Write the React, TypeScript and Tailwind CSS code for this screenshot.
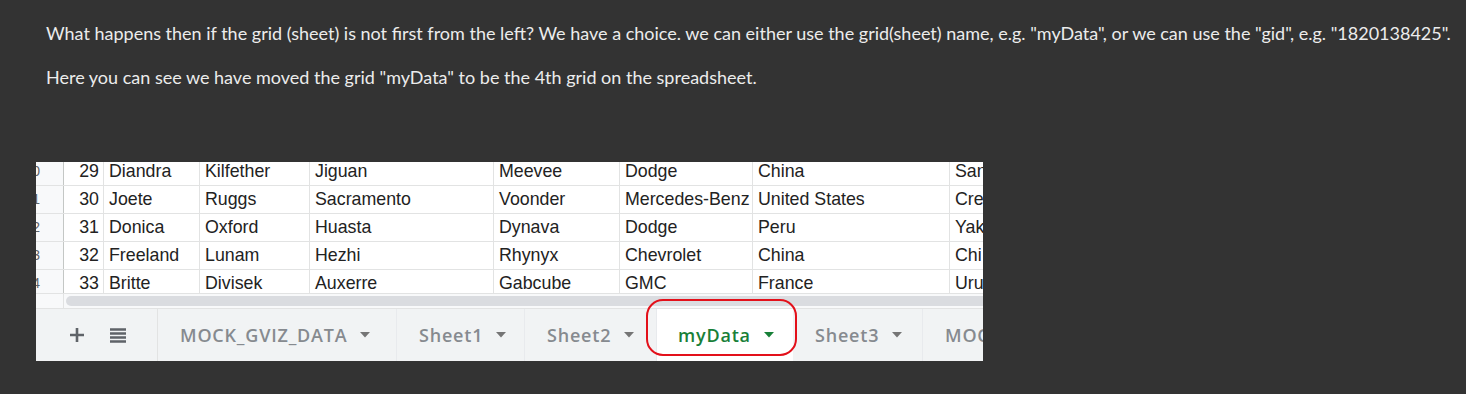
import React from 'react'

type Row = { n: number; first: string; last: string; city: string; co: string; car: string; country: string; next: string }

const ROWS: Row[] = [
  { n: 29, first: 'Diandra', last: 'Kilfether', city: 'Jiguan', co: 'Meevee', car: 'Dodge', country: 'China', next: 'San' },
  { n: 30, first: 'Joete', last: 'Ruggs', city: 'Sacramento', co: 'Voonder', car: 'Mercedes-Benz', country: 'United States', next: 'Cre' },
  { n: 31, first: 'Donica', last: 'Oxford', city: 'Huasta', co: 'Dynava', car: 'Dodge', country: 'Peru', next: 'Yak' },
  { n: 32, first: 'Freeland', last: 'Lunam', city: 'Hezhi', co: 'Rhynyx', car: 'Chevrolet', country: 'China', next: 'Chi' },
  { n: 33, first: 'Britte', last: 'Divisek', city: 'Auxerre', co: 'Gabcube', car: 'GMC', country: 'France', next: 'Uru' },
]

const TABS = [
  { name: 'MOCK_GVIZ_DATA', w: 'w-[239px]' },
  { name: 'Sheet1', w: 'w-[128px]' },
  { name: 'Sheet2', w: 'w-[132px]' },
]

function Caret({ green }: { green?: boolean }) {
  return (
    <svg width="10" height="6" viewBox="0 0 10 6" className="shrink-0">
      <path d="M0 0h10L5 5.5z" fill={green ? '#188038' : '#757575'} />
    </svg>
  )
}

function Cell({ w, children, right }: { w: string; children: React.ReactNode; right?: boolean }) {
  return (
    <div className={`${w} shrink-0 h-full flex items-center border-r border-[#e2e3e3] whitespace-nowrap overflow-hidden ${right ? 'justify-end pr-[4px]' : 'pl-[5px]'}`}>
      {children}
    </div>
  )
}

export default function App() {
  return (
    <div className="min-h-screen bg-[#333333] font-['Lato',sans-serif] text-[#ececec]">
      <div className="pt-[21px] pl-[46px] text-[18px] leading-[24px]">
        <p>What happens then if the grid (sheet) is not first from the left? We have a choice. we can either use the grid(sheet) name, e.g. "myData", or we can use the "gid", e.g. "1820138425".</p>
        <p className="mt-[20px]">Here you can see we have moved the grid "myData" to be the 4th grid on the spreadsheet.</p>
      </div>

      {/* screenshot of the spreadsheet */}
      <div className="ml-[36px] mt-[73px] w-[947px] h-[199px] bg-white flex flex-col overflow-hidden relative">
        <div className="h-[131px] overflow-hidden">
          <div className="-mt-[4px] font-['Liberation_Sans',Arial,sans-serif] text-[17.8px] text-[#222]">
            {ROWS.map(r => (
              <div key={r.n} className="h-[28px] flex border-b border-[#e2e3e3]">
                <div className="w-[28px] shrink-0 h-full flex items-center justify-end overflow-hidden pr-[23px] bg-[#f8f9fa] border-r border-[#c4c7c5] text-[14px] text-[#5f6368]">
                  {r.n + 1}
                </div>
                <Cell w="w-[40px]" right>{r.n}</Cell>
                <Cell w="w-[96px]">{r.first}</Cell>
                <Cell w="w-[110px]">{r.last}</Cell>
                <Cell w="w-[184px]">{r.city}</Cell>
                <Cell w="w-[126px]">{r.co}</Cell>
                <Cell w="w-[133px]">{r.car}</Cell>
                <Cell w="w-[197px]">{r.country}</Cell>
                <Cell w="w-[60px]">{r.next}</Cell>
              </div>
            ))}
          </div>
        </div>

        {/* horizontal scrollbar */}
        <div className="h-[16px] flex border-t border-b border-[#e2e3e3] bg-[#f8f9fa]">
          <div className="w-[28px] shrink-0 border-r border-[#e2e3e3]" />
          <div className="flex-1 pt-[2px] pl-[2px]">
            <div className="h-[10px] w-full rounded-l-full bg-[#dadce0]" />
          </div>
        </div>

        {/* sheet tabs */}
        <div className="flex-1 flex bg-[#f1f3f4] font-['Open_Sans',sans-serif] font-semibold text-[18px] tracking-[0.8px] text-[#868a8f]">
          <div className="w-[122px] shrink-0 flex items-center border-r border-[#e2e3e3]">
            <svg width="14" height="14" viewBox="0 0 14 14" className="ml-[34px]">
              <path d="M7 0v14M0 7h14" stroke="#5f6368" strokeWidth="2.6" />
            </svg>
            <svg width="16" height="15" viewBox="0 0 16 15" className="ml-[26px]">
              <path d="M0 1.5h16M0 5.5h16M0 9.5h16M0 13.5h16" stroke="#5f6368" strokeWidth="2.4" />
            </svg>
          </div>
          {TABS.map(t => (
            <div key={t.name} className={`${t.w} shrink-0 flex items-center gap-[13px] pl-[22px] border-r border-[#e8eaed]`}>
              <span>{t.name}</span>
              <Caret />
            </div>
          ))}
          <div className="w-[136px] shrink-0 flex items-center gap-[13px] pl-[21px] bg-white text-[#188038]">
            <span>myData</span>
            <Caret green />
          </div>
          <div className="w-[130px] shrink-0 flex items-center gap-[13px] pl-[22px] border-r border-[#e8eaed]">
            <span>Sheet3</span>
            <Caret />
          </div>
          <div className="flex-1 flex items-center pl-[22px] overflow-hidden whitespace-nowrap">
            <span>MOCK</span>
          </div>
        </div>

        {/* red highlight drawn over the active tab */}
        <div className="absolute left-[610px] top-[137px] w-[151px] h-[57px] rounded-[17px] border-2 border-[#e3101a]" />
      </div>
    </div>
  )
}
